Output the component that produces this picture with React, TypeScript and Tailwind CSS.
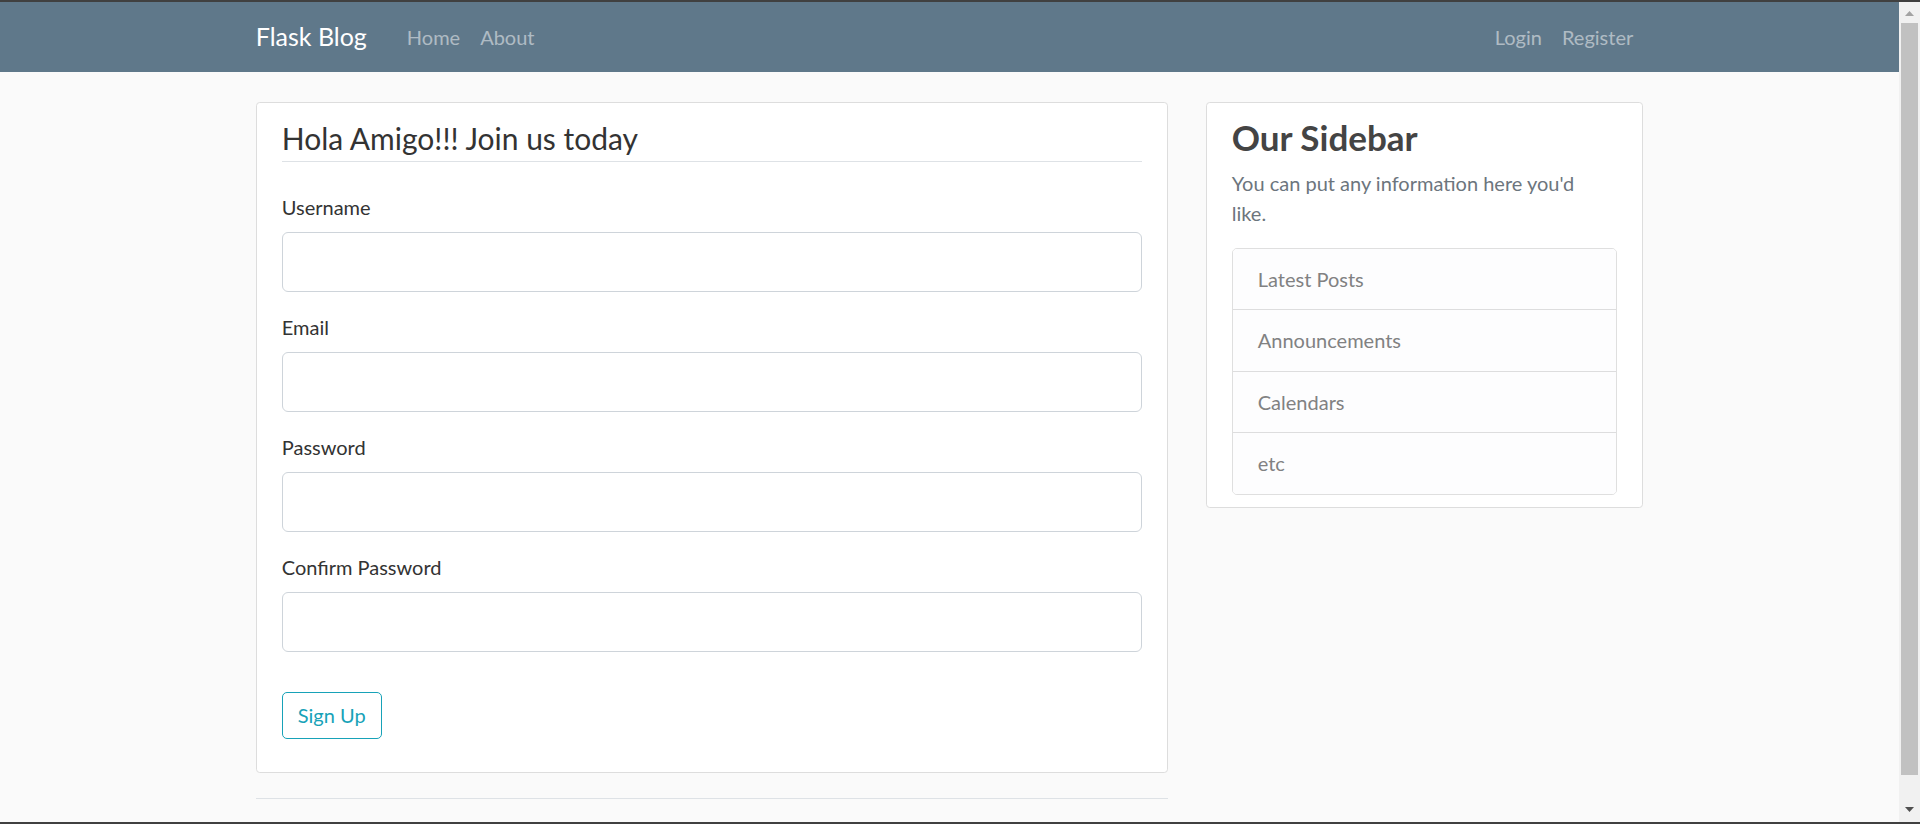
import React from 'react';

const font = { fontFamily: 'Lato, "Noto Sans", sans-serif' };

const fields = ['Username', 'Email', 'Password', 'Confirm Password'];
const sideLinks = ['Latest Posts', 'Announcements', 'Calendars', 'etc'];

const Navbar = () => (
  <nav className="h-[70px] shrink-0 bg-[#5f788a] py-[10px]">
    <div className="w-[1425px] mx-auto px-[18.75px] flex items-center">
      <a className="text-[25px] leading-[37.5px] py-[6.25px] mr-[30px] text-white">Flask Blog</a>
      <div className="flex mr-auto">
        <a className="px-[10px] py-[10px] text-[20px] leading-[30px] text-white/50">Home</a>
        <a className="px-[10px] py-[10px] text-[20px] leading-[30px] text-white/50">About</a>
      </div>
      <div className="flex">
        <a className="px-[10px] py-[10px] text-[20px] leading-[30px] text-white/50">Login</a>
        <a className="px-[10px] py-[10px] text-[20px] leading-[30px] text-white/50">Register</a>
      </div>
    </div>
  </nav>
);

const RegisterForm = () => (
  <div className="bg-white border border-[#dddddd] rounded-[3.75px] px-[25px] pt-[12.5px] pb-[13.5px] mb-[25px]">
    <div className="text-[30px] leading-[45px] text-[#333333] border-b border-[#dee2e6] mb-[30px]">
      Hola Amigo!!! Join us today
    </div>
    {/* fieldset: its own margin does not merge with the last group's */}
    <div className="flex flex-col mb-[20px]">
      {fields.map((f) => (
        <div key={f} className="mb-[20px]">
          <label className="block text-[20px] leading-[30px] mb-[10px] text-[#333333]">{f}</label>
          <input
            type={f.includes('Password') ? 'password' : 'text'}
            className="block w-full h-[60px] bg-white border border-[#ced4da] rounded-[6px] outline-none"
          />
        </div>
      ))}
    </div>
    <div className="mb-[20px]">
      <button className="px-[15px] py-[7.5px] text-[20px] leading-[30px] text-[#17a2b8] border border-[#17a2b8] rounded-[5px] bg-transparent">
        Sign Up
      </button>
    </div>
  </div>
);

const Sidebar = () => (
  <div className="bg-white border border-[#dddddd] rounded-[3.75px] px-[25px] py-[12.5px] mb-[25px]">
    <h3 className="text-[35px] leading-[42px] mb-[10px] font-bold text-[#444444]">Our Sidebar</h3>
    <p className="text-[20px] leading-[30px] mb-[20px] pr-[8px] text-[#6c757d]">
      You can put any information here you'd like.
    </p>
    <ul className="border border-black/[.125] rounded-[5px] overflow-hidden">
      {sideLinks.map((l, i) => (
        <li
          key={l}
          className={
            'px-[25px] py-[15.25px] text-[20px] leading-[30px] text-[#818182] bg-[#fdfdfe]' +
            (i < sideLinks.length - 1 ? ' border-b border-black/[.125]' : '')
          }
        >
          {l}
        </li>
      ))}
    </ul>
  </div>
);

const Scrollbar = () => (
  <div className="w-[21px] shrink-0 bg-[#f1f1f1] flex flex-col">
    <div className="h-[21px] flex justify-center pt-[9px]">
      <svg width="9" height="5" viewBox="0 0 9 5">
        <polygon points="4.5,0 9,5 0,5" fill="#a3a3a3" />
      </svg>
    </div>
    <div className="flex-1 px-[2px]">
      <div className="h-[752px] bg-[#c1c1c1]" />
    </div>
    <div className="h-[21px] flex justify-center pt-[6px]">
      <svg width="9" height="5" viewBox="0 0 9 5">
        <polygon points="0,0 9,0 4.5,5" fill="#505050" />
      </svg>
    </div>
  </div>
);

export default function App() {
  return (
    <div className="w-[1920px] h-[824px] flex flex-col bg-[#404040] overflow-hidden" style={font}>
      <div className="h-[2px] shrink-0" />
      <div className="flex-1 flex min-h-0">
        <div className="flex-1 bg-[#fafafa] flex flex-col overflow-hidden">
          <Navbar />
          <main className="w-[1425px] mx-auto mt-[30px] flex">
            <div className="w-[950px] px-[18.75px]">
              <RegisterForm />
              <div className="border-t border-[#dee2e6] pt-[20px]" />
            </div>
            <div className="w-[475px] px-[18.75px]">
              <Sidebar />
            </div>
          </main>
        </div>
        <Scrollbar />
      </div>
      <div className="h-[2px] shrink-0" />
    </div>
  );
}
